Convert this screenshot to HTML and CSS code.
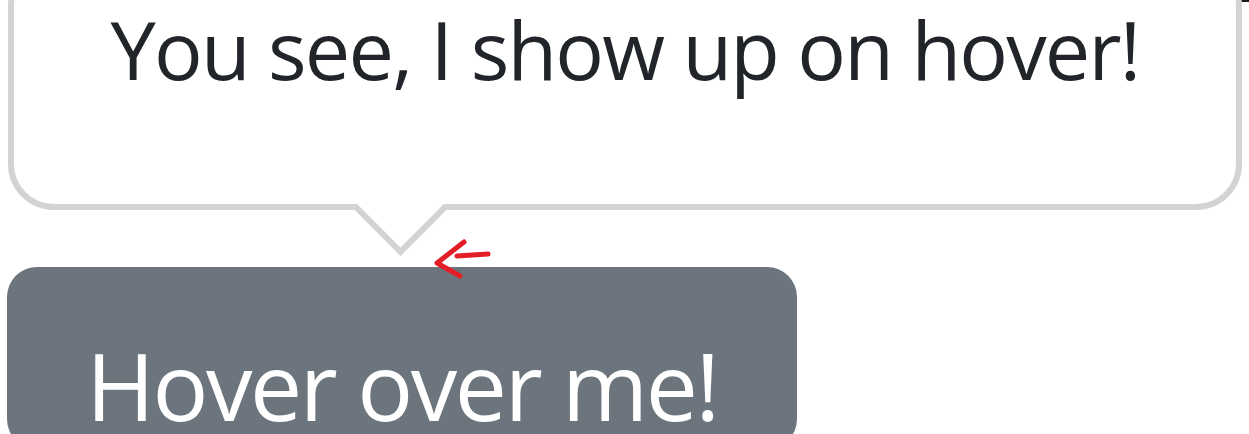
FILE: index.html
```html
<!DOCTYPE html>
<html lang="en">
<head>
  <meta charset="UTF-8">
  <meta name="viewport" content="width=device-width, initial-scale=1.0">
  <title>Tooltip demo</title>
  <link rel="stylesheet" href="styles.css">
</head>
<body>
  <div class="stage">
    <span class="speck speck-left"></span>
    <span class="speck speck-top"></span>

    <div class="tooltip">
      <p class="tooltip-text">You see, I show up on hover!</p>
    </div>

    <button type="button" class="hover-btn">Hover over me!</button>

    <!-- hand-drawn pointer next to the arrow tip -->
    <svg class="pointer" width="70" height="46" viewBox="0 0 70 46">
      <path d="M34 6 L7 27 L30 40" fill="none" stroke="#e41e26" stroke-width="5" stroke-linecap="round" stroke-linejoin="round"/>
      <path d="M27 20 L58 18" fill="none" stroke="#e41e26" stroke-width="5" stroke-linecap="round"/>
    </svg>
  </div>
</body>
</html>
```

FILE: styles.css
```css
body {
    margin: 0;
    font-family: 'Open Sans', 'Noto Sans', sans-serif;
    color: #212529;
    background: #ffffff;
    overflow: hidden;
}
.stage {
    position: relative;
    display: flex;
    flex-direction: column;
    align-items: flex-start;
    padding-left: 7px;
    height: 434px;
}
.tooltip {
    position: relative;
    box-sizing: border-box;
    width: 1234px;
    margin: -40px 0 0 1px;
    padding: 28px 0 100px;
    border: 6px solid #d3d3d3;
    border-radius: 46px;
    background: #ffffff;
    text-align: center;
}
/* the little arrow under the box */
.tooltip::after {
    content: "";
    position: absolute;
    left: 353px;
    bottom: -38px;
    width: 67px;
    height: 67px;
    box-sizing: border-box;
    background: #ffffff;
    border-right: 6px solid #d3d3d3;
    border-bottom: 6px solid #d3d3d3;
    transform: rotate(45deg);
}
.tooltip-text {
    margin: 0;
    font-size: 81px;
    line-height: 110px;
    letter-spacing: -1.8px;
    white-space: nowrap;
}
.hover-btn {
    box-sizing: border-box;
    width: 790px;
    height: 260px;
    margin-top: 57px;
    padding: 54px 0 0;
    border: none;
    border-radius: 30px;
    background-color: #6c757d;
    color: #ffffff;
    font-family: inherit;
    font-size: 93px;
    line-height: 128px;
    letter-spacing: -2.4px;
    display: flex;
    justify-content: center;
    align-items: flex-start;
    cursor: pointer;
}
.speck {
    position: absolute;
    background: #1c1c1c;
}
.speck-left {
    left: 8px;
    top: 93px;
    width: 7px;
    height: 7px;
}
.speck-top {
    left: 1237px;
    top: 0;
    width: 12px;
    height: 2px;
}
.pointer {
    position: absolute;
    left: 430px;
    top: 236px;
}
```
